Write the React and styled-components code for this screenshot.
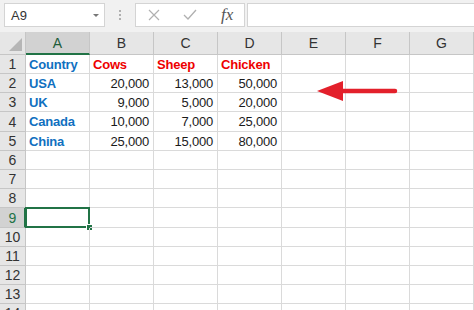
import React from "react";
import styled, { createGlobalStyle } from "styled-components";

const Global = createGlobalStyle`
  html, body { margin: 0; padding: 0; background: #ffffff; }
  body { font-family: "Liberation Sans", Arial, sans-serif; }
`;

const Page = styled.div`
  position: relative;
  width: 474px;
  height: 310px;
  overflow: hidden;
  background: #ffffff;
`;

const Toolbar = styled.div`
  display: flex;
  align-items: flex-start;
  height: 32px;
  padding: 3px 0 0 4px;
  box-sizing: border-box;
  background: #f1f1f1;
`;

const NameBox = styled.div`
  display: flex;
  align-items: center;
  justify-content: space-between;
  width: 101px;
  height: 24px;
  box-sizing: border-box;
  padding: 0 5px 0 6px;
  background: #ffffff;
  border: 1px solid #d4d4d4;
  font-size: 13px;
  color: #333;
`;

const Caret = styled.span`
  width: 0;
  height: 0;
  border-left: 3px solid transparent;
  border-right: 3px solid transparent;
  border-top: 3px solid #777;
`;

const Grip = styled.div`
  display: flex;
  flex-direction: column;
  align-items: center;
  justify-content: center;
  gap: 2px;
  width: 30px;
  height: 24px;
  span {
    width: 2px;
    height: 2px;
    background: #9a9a9a;
    border-radius: 1px;
  }
`;

const FxBox = styled.div`
  display: flex;
  align-items: center;
  width: 110px;
  height: 24px;
  box-sizing: border-box;
  background: #ffffff;
  border: 1px solid #d4d4d4;
  padding-left: 12px;
  gap: 23px;
`;

const Fx = styled.span`
  font-family: "Liberation Serif", "Times New Roman", serif;
  font-style: italic;
  font-size: 17px;
  color: #555;
  margin-left: 1px;
`;

const FormulaInput = styled.div`
  flex: 1;
  height: 24px;
  margin-left: 2px;
  box-sizing: border-box;
  background: #ffffff;
  border: 1px solid #d4d4d4;
  border-right: none;
`;

const Sheet = styled.div`
  display: grid;
  grid-template-columns: 26px repeat(7, 64px);
`;

const Corner = styled.div`
  position: relative;
  height: 23px;
  box-sizing: border-box;
  background: #e6e6e6;
  border-right: 1px solid #c6c6c6;
  border-bottom: 1px solid #c6c6c6;
  &::after {
    content: "";
    position: absolute;
    right: 3px;
    bottom: 3px;
    width: 0;
    height: 0;
    border-left: 13px solid transparent;
    border-bottom: 13px solid #b6b6b6;
  }
`;

const ColHead = styled.div`
  display: flex;
  align-items: center;
  justify-content: center;
  height: 23px;
  box-sizing: border-box;
  background: ${(p) => (p.$active ? "#d2d2d2" : "#e6e6e6")};
  border-right: 1px solid #c6c6c6;
  border-bottom: ${(p) => (p.$active ? "2px solid #217346" : "1px solid #c6c6c6")};
  font-size: 14px;
  color: ${(p) => (p.$active ? "#1e5c3a" : "#333")};
  padding-top: ${(p) => (p.$active ? "1px" : "0")};
`;

const RowHead = styled.div`
  display: flex;
  align-items: center;
  justify-content: center;
  height: ${(p) => p.$h}px;
  box-sizing: border-box;
  background: ${(p) => (p.$active ? "#d2d2d2" : "#e6e6e6")};
  border-right: ${(p) => (p.$active ? "2px solid #217346" : "1px solid #c6c6c6")};
  border-bottom: 1px solid #c6c6c6;
  font-size: 14px;
  color: ${(p) => (p.$active ? "#217346" : "#333")};
  padding-left: ${(p) => (p.$active ? "1px" : "0")};
`;

const Cell = styled.div`
  position: relative;
  display: flex;
  align-items: center;
  justify-content: ${(p) => (p.$num ? "flex-end" : "flex-start")};
  height: ${(p) => p.$h}px;
  box-sizing: border-box;
  padding: 0 4px 0 3px;
  border-right: 1px solid #dadada;
  border-bottom: 1px solid #dadada;
  font-size: 13px;
  letter-spacing: -0.2px;
  font-weight: ${(p) => (p.$tone ? 700 : 400)};
  color: ${(p) =>
    p.$tone === "blue" ? "#1070c0" : p.$tone === "red" ? "#ee0000" : "#1a1a1a"};
  white-space: nowrap;
  ${(p) =>
    p.$selected &&
    `
    &::before {
      content: "";
      position: absolute;
      left: -1px;
      top: -1px;
      right: -1px;
      bottom: -1px;
      border: 2px solid #217346;
    }
    &::after {
      content: "";
      position: absolute;
      right: -4px;
      bottom: -4px;
      width: 5px;
      height: 5px;
      background: #217346;
      border: 1px solid #ffffff;
    }
  `}
`;

const Arrow = styled.svg`
  position: absolute;
  left: 314px;
  top: 78px;
`;

const cols = ["A", "B", "C", "D", "E", "F", "G"];
const heights = [19, 19, 19, 20, 19, 19, 19, 19, 20, 19, 19, 19, 19, 19];

const data = {
  1: [
    { t: "Country", tone: "blue" },
    { t: "Cows", tone: "red" },
    { t: "Sheep", tone: "red" },
    { t: "Chicken", tone: "red" },
  ],
  2: [{ t: "USA", tone: "blue" }, { t: "20,000", num: true }, { t: "13,000", num: true }, { t: "50,000", num: true }],
  3: [{ t: "UK", tone: "blue" }, { t: "9,000", num: true }, { t: "5,000", num: true }, { t: "20,000", num: true }],
  4: [{ t: "Canada", tone: "blue" }, { t: "10,000", num: true }, { t: "7,000", num: true }, { t: "25,000", num: true }],
  5: [{ t: "China", tone: "blue" }, { t: "25,000", num: true }, { t: "15,000", num: true }, { t: "80,000", num: true }],
};

export default function App() {
  return (
    <Page>
      <Global />
      <Toolbar>
        <NameBox>
          A9
          <Caret />
        </NameBox>
        <Grip>
          <span />
          <span />
          <span />
        </Grip>
        <FxBox>
          <svg width="12" height="12" viewBox="0 0 12 12">
            <path d="M1 1 L11 11 M11 1 L1 11" stroke="#b0b0b0" strokeWidth="1.2" fill="none" />
          </svg>
          <svg width="14" height="12" viewBox="0 0 14 12">
            <path d="M1 6 L5 10 L13 1" stroke="#b0b0b0" strokeWidth="1.3" fill="none" />
          </svg>
          <Fx>fx</Fx>
        </FxBox>
        <FormulaInput />
      </Toolbar>
      <Sheet>
        <Corner />
        {cols.map((c) => (
          <ColHead key={c} $active={c === "A"}>
            {c}
          </ColHead>
        ))}
        {heights.map((h, i) => {
          const r = i + 1;
          const row = data[r] || [];
          return (
            <React.Fragment key={r}>
              <RowHead $h={h} $active={r === 9}>
                {r}
              </RowHead>
              {cols.map((c, ci) => {
                const d = row[ci];
                return (
                  <Cell
                    key={c}
                    $h={h}
                    $num={d && d.num}
                    $tone={d && d.tone}
                    $selected={r === 9 && c === "A"}
                  >
                    {d ? d.t : ""}
                  </Cell>
                );
              })}
            </React.Fragment>
          );
        })}
      </Sheet>
      <Arrow width="86" height="26" viewBox="0 0 86 26">
        <path d="M3 13 L29 3 L29 23 Z" fill="#e3202b" />
        <path d="M27 13 L81 13" stroke="#e3202b" strokeWidth="4.5" strokeLinecap="round" />
      </Arrow>
    </Page>
  );
}
